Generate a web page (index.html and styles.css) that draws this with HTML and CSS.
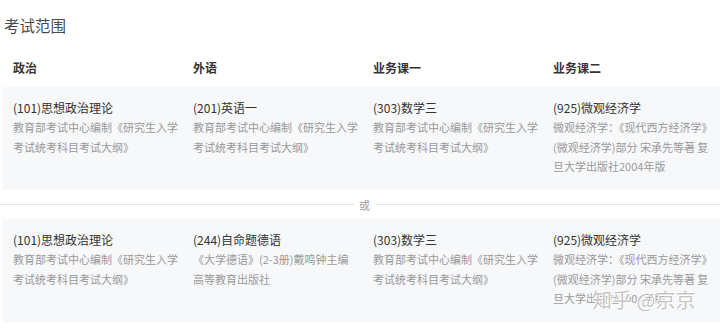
FILE: index.html
```html
<!DOCTYPE html>
<html lang="zh-CN">
<head>
<meta charset="utf-8">
<title>考试范围</title>
<link rel="stylesheet" href="styles.css">
</head>
<body>
<div class="page">
  <div class="title">考试范围</div>
  <div class="head-row">
    <div class="col">政治</div>
    <div class="col">外语</div>
    <div class="col">业务课一</div>
    <div class="col">业务课二</div>
  </div>
  <div class="box">
    <div class="col">
      <div class="main">(101)思想政治理论</div>
      <div class="sub">教育部考试中心编制《研究生入学考试统考科目考试大纲》</div>
    </div>
    <div class="col">
      <div class="main">(201)英语一</div>
      <div class="sub">教育部考试中心编制《研究生入学考试统考科目考试大纲》</div>
    </div>
    <div class="col">
      <div class="main">(303)数学三</div>
      <div class="sub">教育部考试中心编制《研究生入学考试统考科目考试大纲》</div>
    </div>
    <div class="col">
      <div class="main">(925)微观经济学</div>
      <div class="sub">微观经济学：《现代西方经济学》(微观经济学)部分 宋承先等著 复旦大学出版社2004年版</div>
    </div>
  </div>
  <div class="divider"><span class="line line-left"></span><span class="or">或</span><span class="line"></span></div>
  <div class="box">
    <div class="col">
      <div class="main">(101)思想政治理论</div>
      <div class="sub">教育部考试中心编制《研究生入学考试统考科目考试大纲》</div>
    </div>
    <div class="col">
      <div class="main">(244)自命题德语</div>
      <div class="sub">《大学德语》(2-3册)戴鸣钟主编 高等教育出版社</div>
    </div>
    <div class="col">
      <div class="main">(303)数学三</div>
      <div class="sub">教育部考试中心编制《研究生入学考试统考科目考试大纲》</div>
    </div>
    <div class="col">
      <div class="main">(925)微观经济学</div>
      <div class="sub">微观经济学：《现代西方经济学》(微观经济学)部分 宋承先等著 复旦大学出版社2004年版</div>
    </div>
  </div>
  <div class="watermark">知乎 @京京</div>
</div>
</body>
</html>
```

FILE: styles.css
```css
html, body {
  margin: 0;
  padding: 0;
  background: #ffffff;
}
.page {
  position: relative;
  width: 720px;
  height: 335px;
  overflow: hidden;
  font-family: "Noto Sans CJK SC", "Noto Sans", sans-serif;
  color: #333333;
}
.title {
  padding: 15px 0 0 4px;
  font-size: 15.5px;
  line-height: 20px;
  color: #4a4a4a;
}
.head-row {
  display: grid;
  grid-template-columns: repeat(4, 180px);
  padding: 23px 0 9px 13px;
  font-size: 12px;
  line-height: 20px;
  font-weight: 700;
  color: #333333;
}
.box {
  display: grid;
  grid-template-columns: repeat(4, 180px);
  margin-left: 3px;
  padding: 10px 0 13.5px 10px;
  background: #f7f8fa;
}
.box .col {
  width: 166px;
}
.main {
  font-size: 12px;
  line-height: 21px;
  color: #333333;
}
.sub {
  font-size: 11px;
  line-height: 19.5px;
  color: #999999;
}
.divider {
  display: flex;
  align-items: center;
  height: 29px;
}
.divider .line {
  flex: 1;
  height: 1px;
  background: #e6e6e6;
}
.divider .line-left {
  flex: none;
  width: 354px;
}
.divider .or {
  padding: 0 5px;
  font-size: 11px;
  line-height: 14px;
  color: #999999;
}
.watermark {
  position: absolute;
  left: 592px;
  top: 287px;
  font-size: 20px;
  line-height: 26px;
  color: rgba(140, 140, 140, 0.5);
  text-shadow: 0 0 2px #ffffff, 1px 1px 0 #ffffff, -1px -1px 0 #ffffff;
  white-space: nowrap;
}
```
